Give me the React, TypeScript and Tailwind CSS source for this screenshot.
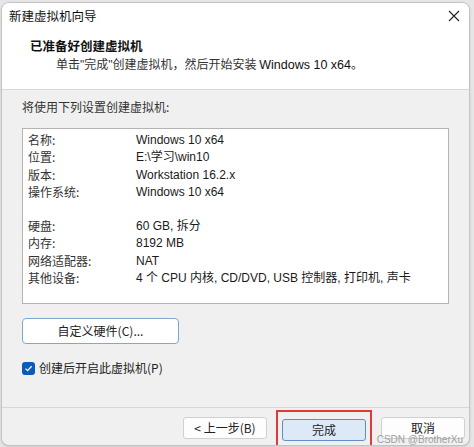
import React from 'react'

const cjk = "font-['Noto_Sans_CJK_SC','Noto_Sans',sans-serif]"
const latin = "font-['Liberation_Sans','Noto_Sans_CJK_SC',sans-serif]"

const rows: [string, string][] = [
  ['名称:', 'Windows 10 x64'],
  ['位置:', 'E:\\学习\\win10'],
  ['版本:', 'Workstation 16.2.x'],
  ['操作系统:', 'Windows 10 x64'],
]

const hwRows: [string, string][] = [
  ['硬盘:', '60 GB, 拆分'],
  ['内存:', '8192 MB'],
  ['网络适配器:', 'NAT'],
  ['其他设备:', '4 个 CPU 内核, CD/DVD, USB 控制器, 打印机, 声卡'],
]

const SettingRow: React.FC<{ label: string; value: string }> = ({ label, value }) => (
  <div className="flex h-[17.5px] items-center text-[12px] text-[#1a1a1a]">
    <span className={`w-[108px] ${cjk} text-[#333]`}>{label}</span>
    <span className={`${latin} text-[12px]`}>{value}</span>
  </div>
)

const App: React.FC = () => {
  return (
    <div className="w-[474px] h-[447px] bg-[#e6e6e6] pt-[2px] pl-[1px] overflow-hidden">
      <div className="w-[469px] h-[444px] rounded-[8px] border border-[#c4c4c4] bg-[#f0f0f0] overflow-hidden flex flex-col shadow-sm">
        {/* header */}
        <div className="h-[87px] bg-white border-b border-[#d9d9d9] flex flex-col">
          <div className="h-[26px] flex items-center justify-between pl-[7px] pr-[8px]">
            <span className={`${cjk} text-[12.5px] text-[#111]`}>新建虚拟机向导</span>
            <svg width="12" height="12" viewBox="0 0 12 12" className="mr-[1px]">
              <path d="M1 1 L11 11 M11 1 L1 11" stroke="#222" strokeWidth="1.1" />
            </svg>
          </div>
          <div className={`${cjk} pl-[28px] mt-[8px] text-[12.5px] font-bold text-[#111]`}>已准备好创建虚拟机</div>
          <div className={`${cjk} pl-[54px] -mt-[1px] text-[12px] text-[#333]`}>
            单击<span className={latin}>"</span>完成<span className={latin}>"</span>创建虚拟机，然后开始安装{' '}
            <span className={latin + ' text-[12.5px] text-[#111]'}>Windows 10 x64</span>。
          </div>
        </div>

        {/* body */}
        <div className="flex-1 px-[20px] flex flex-col">
          <div className={`${cjk} mt-[8px] text-[12px] text-[#333]`}>将使用下列设置创建虚拟机:</div>
          <div className="mt-[12px] h-[176px] bg-white border border-[#b4b4b4] pt-[2px] pl-[5px]">
            {rows.map(([l, v]) => (
              <SettingRow key={l} label={l} value={v} />
            ))}
            <div className="h-[16px]" />
            {hwRows.map(([l, v]) => (
              <SettingRow key={l} label={l} value={v} />
            ))}
          </div>

          <button className={`${cjk} mt-[14px] w-[157px] h-[26px] rounded-[4px] border border-[#7fa7d4] bg-white text-[12px] text-[#222]`}>
            自定义硬件(C)...
          </button>

          <label className="mt-[15px] flex items-center gap-[4px]">
            <span className="w-[13px] h-[13px] rounded-[3px] bg-[#0c5bb8] flex items-center justify-center">
              <svg width="9" height="9" viewBox="0 0 9 9">
                <path d="M1.5 4.6 L3.6 6.6 L7.6 2.2" stroke="white" strokeWidth="1.3" fill="none" />
              </svg>
            </span>
            <span className={`${cjk} text-[12px] text-[#222]`}>创建后开启此虚拟机(P)</span>
          </label>
        </div>

        {/* footer */}
        <div className="h-[38px] border-t border-[#d6d6d6] flex items-start justify-end pr-[4px] pt-[9px] gap-[9px] relative">
          <button className={`${cjk} w-[84px] h-[22px] rounded-[3px] border border-[#d0d0d0] bg-[#fdfdfd] text-[12px] text-[#222]`}>
            &lt; 上一步(B)
          </button>
          <div className="-mt-[7px] border-2 border-[#e03a3a] px-[4px] pt-[5px] pb-[6px]">
            <button className={`${cjk} w-[84px] h-[22px] rounded-[3px] border border-[#5f8fc7] bg-[#dde9f6] text-[12px] text-[#222]`}>
              完成
            </button>
          </div>
          <button className={`${cjk} w-[84px] h-[22px] rounded-[3px] border border-[#d0d0d0] bg-[#fdfdfd] text-[12px] text-[#222]`}>
            取消
          </button>
          <span className="absolute right-[6px] bottom-[-1px] font-['Liberation_Sans',sans-serif] text-[10px] leading-[12px] text-[#a0a0a0]">
            CSDN @BrotherXu
          </span>
        </div>
      </div>
    </div>
  )
}

export default App
